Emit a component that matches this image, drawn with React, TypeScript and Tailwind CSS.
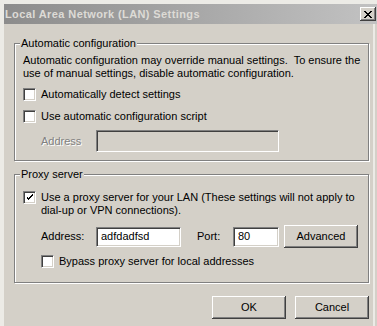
import React from 'react';

const sunken = 'border border-t-[#808080] border-l-[#808080] border-b-white border-r-white shadow-[inset_1px_1px_0_#404040,inset_-1px_-1px_0_#d4d0c8]';
const raised = 'bg-[#d4d0c8] shadow-[inset_-1px_-1px_0_#404040,inset_1px_1px_0_#fff,inset_-2px_-2px_0_#808080,inset_2px_2px_0_#d4d0c8]';

const Checkbox: React.FC<{ checked?: boolean }> = ({ checked }) => (
  <div className={`w-[13px] h-[13px] bg-white flex-shrink-0 flex items-center justify-center ${sunken}`}>
    {checked && (
      <svg width="7" height="7" viewBox="0 0 7 7" shapeRendering="crispEdges">
        <path d="M0 2h1v3h1v1h1v-1h1v-1h1v-1h1v-1h1v-2h-1v1h-1v1h-1v1h-1v1h-1v-1h-1v-1z" fill="#000" />
      </svg>
    )}
  </div>
);

const GroupBox: React.FC<{ title: string; className?: string; children: React.ReactNode }> = ({ title, className, children }) => (
  <div className={`relative border border-[#808080] shadow-[inset_1px_1px_0_#fff,1px_1px_0_#fff] ${className ?? ''}`}>
    <span className="absolute left-[5px] -top-[8px] bg-[#d4d0c8] px-[1px] leading-[14px]">{title}</span>
    {children}
  </div>
);

export default function App() {
  return (
    <div
      className="w-[377px] h-[326px] bg-[#d4d0c8] text-[11px] text-black border-t-[4px] border-l-[4px] border-t-[#ecebe6] border-l-[#ecebe6] overflow-hidden"
      style={{ fontFamily: '"Liberation Sans", Arial, sans-serif' }}
    >
      <div className="h-[20px] bg-gradient-to-r from-[#8c8c8c] to-[#c2c2c2] flex items-center justify-between pl-[1px] pr-[1px]">
        <span className="font-bold text-[11px] text-[#dddbd6] tracking-[0.4px]">Local Area Network (LAN) Settings</span>
        <div className={`w-[16px] h-[14px] flex items-center justify-center ${raised}`}>
          <svg width="8" height="7" viewBox="0 0 8 7" shapeRendering="crispEdges">
            <path d="M0 0h2v1h1v1h2v-1h1v-1h2v1h-1v1h-1v1h-1v1h1v1h1v1h1v1h-2v-1h-1v-1h-2v1h-1v1h-2v-1h1v-1h1v-1h1v-1h-1v-1h-1v-1h-1z" fill="#000" />
          </svg>
        </div>
      </div>

      <div className="pl-[10px] pr-[4px] flex flex-col border-r-[2px] border-r-[#ecebe6] h-[302px] w-[371px]">
        <GroupBox title="Automatic configuration" className="mt-[19px] w-[355px] h-[118px] pl-[8px] pt-[10px]">
          <p className="leading-[13px] whitespace-pre">{'Automatic configuration may override manual settings.  To ensure the\nuse of manual settings, disable automatic configuration.'}</p>
          <div className="flex items-center gap-[5px] mt-[8px] h-[13px]">
            <Checkbox />
            <span>Automatically detect settings</span>
          </div>
          <div className="flex items-center gap-[5px] mt-[9px] h-[13px]">
            <Checkbox />
            <span>Use automatic configuration script</span>
          </div>
          <div className="flex items-center mt-[7px] h-[22px]">
            <span className="pl-[18px] w-[73px] text-[#808080] [text-shadow:1px_1px_0_#fff]">Address</span>
            <div className={`w-[183px] h-[22px] bg-[#d4d0c8] ${sunken}`} />
          </div>
        </GroupBox>

        <GroupBox title="Proxy server" className="mt-[13px] w-[355px] h-[109px] pl-[8px] pt-[16px]">
          <div className="flex items-start gap-[5px]">
            <Checkbox checked />
            <p className="leading-[13px]">
              Use a proxy server for your LAN (These settings will not apply to
              <br />
              dial-up or VPN connections).
            </p>
          </div>
          <div className="flex items-center mt-[8px] h-[23px]">
            <span className="pl-[18px] w-[73px]">Address:</span>
            <div className={`w-[85px] h-[20px] bg-white flex items-center pl-[4px] ${sunken}`}>adfdadfsd</div>
            <span className="ml-[16px] w-[36px]">Port:</span>
            <div className={`w-[46px] h-[20px] bg-white flex items-center pl-[4px] ${sunken}`}>80</div>
            <button className={`ml-[5px] w-[74px] h-[23px] flex items-center justify-center ${raised}`}>Advanced</button>
          </div>
          <div className="flex items-center gap-[5px] mt-[7px] pl-[18px] h-[13px]">
            <Checkbox />
            <span>Bypass proxy server for local addresses</span>
          </div>
        </GroupBox>

        <div className="flex justify-end gap-[9px] mt-[13px] w-[355px]">
          <button className={`w-[74px] h-[23px] flex items-center justify-center ${raised}`}>OK</button>
          <button className={`w-[74px] h-[23px] flex items-center justify-center ${raised}`}>Cancel</button>
        </div>
      </div>
    </div>
  );
}
